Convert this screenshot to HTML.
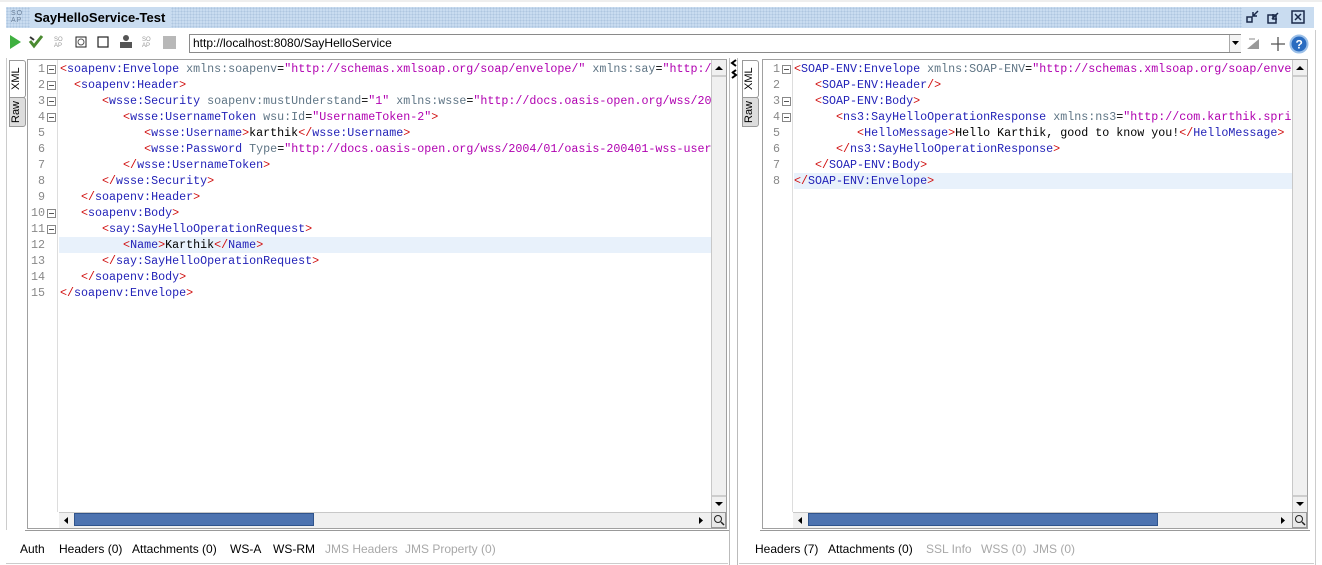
<!DOCTYPE html>
<html><head><style>
*{margin:0;padding:0;box-sizing:border-box}
body{width:1322px;height:565px;background:#fff;position:relative;overflow:hidden;font-family:"Liberation Sans",sans-serif;font-size:12px}
.abs{position:absolute}
.title{left:6px;top:7px;width:1308px;height:21px;background:#c9dcf0;background-image:radial-gradient(#aec6e0 0.8px,transparent 0.9px);background-size:3px 3px}
.title .lbl{position:absolute;left:24px;top:0;height:21px;line-height:21px;padding:0 6px 0 4px;background:#c9dcf0;font-weight:bold;font-size:13px;color:#000}
.soap{position:absolute;left:5px;top:3px;font-size:7px;line-height:7px;color:#6a7f99;letter-spacing:1px}
.tb{left:6px;top:30px;width:1308px;height:26px;background:#fff}
.url{left:189px;top:34px;width:1052px;height:19px;border:1px solid #8a8a8a;background:#fff;font-size:12px;line-height:17px;padding-left:3px}
.ed{border:1px solid #a0a0a0;background:#fff;overflow:hidden}
pre{font-family:"Liberation Mono",monospace;font-size:11.68px;line-height:16px;margin:0}
.t{color:#2323b8}.b{color:#d01010}.a{color:#5f7585}.v{color:#b000b0}
.ln{position:absolute;color:#888;font-family:"Liberation Mono",monospace;font-size:11.7px;line-height:16px;text-align:right}
.fold{display:inline-block;width:9px;height:9px;border:1px solid #888;position:relative;vertical-align:-1px;margin-left:2px}
.fold:after{content:"";position:absolute;left:1px;top:3px;width:5px;height:1px;background:#555}
.vs{background:#f0f0f0;border-left:1px solid #c8c8c8}
.hs{background:#f0f0f0;border-top:1px solid #c8c8c8}
.thumb{background:#4d73b0;border:1px solid #30548c}
.tab{border:1px solid #999;background:#e8e8e8;border-radius:3px 0 0 3px;writing-mode:vertical-rl;transform:rotate(180deg);font-size:11px;text-align:center}
.bt{top:542px;font-size:12px}
.g{color:#a8a8a8}
</style></head><body>
<div class="abs" style="left:0;top:0;width:1322px;height:2px;background:#eee"></div>
<div class="abs title"><div class="soap">SO<br>AP</div><div class="lbl">SayHelloService-Test</div>
<div style="position:absolute;right:0;top:0;width:72px;height:21px;background:#c9dcf0"></div>
<svg style="position:absolute;right:6px;top:3px" width="64" height="15"><g stroke="#1a2a4a" fill="none" stroke-width="1.5"><rect x="3" y="7" width="5" height="5"/><path d="M9 6 L14 1 M9 2 V6 H13"/><rect x="24" y="5" width="8" height="8"/><path d="M28 9 L34 3 M29 4 V9 H33" /><rect x="48" y="1" width="12" height="12"/><path d="M51 4 L57 10 M57 4 L51 10"/></g></svg></div>
<div class="abs tb">
<svg width="180" height="26"><path d="M4 5 L15 12 L4 19Z" fill="#3fb040"/><path d="M24 11 L28 16 L36 6" stroke="#4a8a30" stroke-width="3" fill="none"/><path d="M24 7 L28 10" stroke="#333" stroke-width="2"/>
<text x="48" y="11" font-size="6" fill="#999">SO</text><text x="48" y="17" font-size="6" fill="#999">AP</text>
<rect x="70" y="7" width="10" height="10" fill="none" stroke="#222"/><circle cx="75" cy="12" r="3" fill="none" stroke="#555"/>
<rect x="92" y="7" width="10" height="10" fill="none" stroke="#222" stroke-width="1.2"/>
<circle cx="120" cy="8" r="3" fill="#555"/><rect x="114" y="12" width="12" height="6" fill="#555"/>
<text x="136" y="11" font-size="6" fill="#999">SO</text><text x="136" y="17" font-size="6" fill="#999">AP</text>
<rect x="157" y="6" width="13" height="13" fill="#b8b8b8"/></svg></div>
<div class="abs url">http://localhost:8080/SayHelloService</div>
<div class="abs" style="left:1229px;top:35px;width:12px;height:17px;border-left:1px solid #aaa;background:#f4f4f4"><svg width="11" height="16"><path d="M2 6 H9 L5.5 10Z" fill="#000"/></svg></div>
<svg class="abs" style="left:1245px;top:33px" width="70" height="22"><path d="M2 16 L14 6 V16Z" fill="#999"/><path d="M4 6 H10" stroke="#888"/><path d="M33 4 V18 M26 11 H40" stroke="#555" stroke-width="1.3"/><circle cx="54" cy="11" r="8.5" fill="#2a6cc0" stroke="#9cc0e8" stroke-width="2"/><text x="50.5" y="15.5" font-size="12" font-weight="bold" fill="#fff">?</text></svg>

<div class="abs tab" style="left:9px;top:60px;width:17px;height:38px;background:#fff">XML</div>
<div class="abs tab" style="left:9px;top:97px;width:17px;height:30px;background:#ddd">Raw</div>
<div class="abs" style="left:6px;top:58px;width:1px;height:472px;background:#ccc"></div>
<div class="abs ed" style="left:27px;top:59px;width:700px;height:470px"></div>
<div class="abs" style="left:28px;top:60px;width:30px;height:452px;border-right:1px solid #ddd"></div>
<div class="abs" style="left:59px;top:237px;width:652px;height:16px;background:#e8f1fb"></div>
<div class="ln" style="left:28px;top:61px;width:17px">1<br>2<br>3<br>4<br>5<br>6<br>7<br>8<br>9<br>10<br>11<br>12<br>13<br>14<br>15</div>
<div class="abs" style="left:45px;top:61px;line-height:16px"><span class="fold"></span><br><span class="fold"></span><br><span class="fold"></span><br><span class="fold"></span><br><br><br><br><br><br><span class="fold"></span><br><span class="fold"></span></div>
<div class="abs" style="left:60px;top:61px;width:651px;height:451px;overflow:hidden"><pre><span class="b">&lt;</span><span class="t">soapenv:Envelope</span> <span class="a">xmlns:soapenv</span>=<span class="v">"http://schemas.xmlsoap.org/soap/envelope/"</span> <span class="a">xmlns:say</span>=<span class="v">"http://</span>
  <span class="b">&lt;</span><span class="t">soapenv:Header</span><span class="b">&gt;</span>
      <span class="b">&lt;</span><span class="t">wsse:Security</span> <span class="a">soapenv:mustUnderstand</span>=<span class="v">"1"</span> <span class="a">xmlns:wsse</span>=<span class="v">"http://docs.oasis-open.org/wss/20</span>
         <span class="b">&lt;</span><span class="t">wsse:UsernameToken</span> <span class="a">wsu:Id</span>=<span class="v">"UsernameToken-2"</span><span class="b">&gt;</span>
            <span class="b">&lt;</span><span class="t">wsse:Username</span><span class="b">&gt;</span>karthik<span class="b">&lt;/</span><span class="t">wsse:Username</span><span class="b">&gt;</span>
            <span class="b">&lt;</span><span class="t">wsse:Password</span> <span class="a">Type</span>=<span class="v">"http://docs.oasis-open.org/wss/2004/01/oasis-200401-wss-user</span>
         <span class="b">&lt;/</span><span class="t">wsse:UsernameToken</span><span class="b">&gt;</span>
      <span class="b">&lt;/</span><span class="t">wsse:Security</span><span class="b">&gt;</span>
   <span class="b">&lt;/</span><span class="t">soapenv:Header</span><span class="b">&gt;</span>
   <span class="b">&lt;</span><span class="t">soapenv:Body</span><span class="b">&gt;</span>
      <span class="b">&lt;</span><span class="t">say:SayHelloOperationRequest</span><span class="b">&gt;</span>
         <span class="b">&lt;</span><span class="t">Name</span><span class="b">&gt;</span>Karthik<span class="b">&lt;/</span><span class="t">Name</span><span class="b">&gt;</span>
      <span class="b">&lt;/</span><span class="t">say:SayHelloOperationRequest</span><span class="b">&gt;</span>
   <span class="b">&lt;/</span><span class="t">soapenv:Body</span><span class="b">&gt;</span>
<span class="b">&lt;/</span><span class="t">soapenv:Envelope</span><span class="b">&gt;</span></pre></div>
<div class="abs vs" style="left:711px;top:60px;width:15px;height:452px"><svg width="15" height="452"><path d="M3 10 H11 L7 6Z" fill="#000"/><path d="M3 442 H11 L7 446Z" fill="#000"/><line x1="0" y1="16" x2="15" y2="16" stroke="#aaa"/><line x1="0" y1="436" x2="15" y2="436" stroke="#aaa"/></svg></div>
<div class="abs hs" style="left:59px;top:512px;width:652px;height:16px"><svg width="652" height="15"><path d="M9 4 V11 L5 7.5Z" fill="#000"/><path d="M640 4 V11 L644 7.5Z" fill="#000"/></svg></div>
<div class="abs thumb" style="left:74px;top:513px;width:240px;height:13px"></div>
<div class="abs" style="left:711px;top:512px;width:15px;height:16px;background:#e8e8e8;border:1px solid #999"><svg width="13" height="14"><circle cx="6" cy="6" r="3.5" fill="none" stroke="#222"/><path d="M9 9 L12 12" stroke="#222" stroke-width="1.5"/></svg></div>
<div class="abs" style="left:25px;top:530px;width:705px;height:1px;background:#999"></div>

<div class="abs" style="left:729px;top:58px;width:9px;height:507px;border-left:1px solid #bbb;border-right:1px solid #bbb;background:#fff"><svg width="8" height="25"><path d="M6 2 L2 5 L6 8 M6 12 L2 15" stroke="#000" stroke-width="2" fill="none"/><path d="M2 14 L6 17 L2 20" stroke="#000" stroke-width="2" fill="none"/></svg></div>

<div class="abs tab" style="left:742px;top:60px;width:17px;height:38px;background:#fff">XML</div>
<div class="abs tab" style="left:742px;top:97px;width:17px;height:30px;background:#ddd">Raw</div>
<div class="abs ed" style="left:762px;top:59px;width:546px;height:470px"></div>
<div class="abs" style="left:763px;top:60px;width:30px;height:452px;border-right:1px solid #ddd"></div>
<div class="abs" style="left:794px;top:173px;width:498px;height:16px;background:#e8f1fb"></div>
<div class="ln" style="left:763px;top:61px;width:17px">1<br>2<br>3<br>4<br>5<br>6<br>7<br>8</div>
<div class="abs" style="left:780px;top:61px;line-height:16px"><span class="fold"></span><br><br><span class="fold"></span><br><span class="fold"></span></div>
<div class="abs" style="left:794px;top:61px;width:498px;height:451px;overflow:hidden"><pre><span class="b">&lt;</span><span class="t">SOAP-ENV:Envelope</span> <span class="a">xmlns:SOAP-ENV</span>=<span class="v">"http://schemas.xmlsoap.org/soap/envelope/"</span>
   <span class="b">&lt;</span><span class="t">SOAP-ENV:Header</span><span class="b">/&gt;</span>
   <span class="b">&lt;</span><span class="t">SOAP-ENV:Body</span><span class="b">&gt;</span>
      <span class="b">&lt;</span><span class="t">ns3:SayHelloOperationResponse</span> <span class="a">xmlns:ns3</span>=<span class="v">"http://com.karthik.springws"</span>
         <span class="b">&lt;</span><span class="t">HelloMessage</span><span class="b">&gt;</span>Hello Karthik, good to know you!<span class="b">&lt;/</span><span class="t">HelloMessage</span><span class="b">&gt;</span>
      <span class="b">&lt;/</span><span class="t">ns3:SayHelloOperationResponse</span><span class="b">&gt;</span>
   <span class="b">&lt;/</span><span class="t">SOAP-ENV:Body</span><span class="b">&gt;</span>
<span class="b">&lt;/</span><span class="t">SOAP-ENV:Envelope</span><span class="b">&gt;</span></pre></div>
<div class="abs vs" style="left:1292px;top:60px;width:15px;height:452px"><svg width="15" height="452"><path d="M3 10 H11 L7 6Z" fill="#000"/><path d="M3 442 H11 L7 446Z" fill="#000"/><line x1="0" y1="16" x2="15" y2="16" stroke="#aaa"/><line x1="0" y1="436" x2="15" y2="436" stroke="#aaa"/></svg></div>
<div class="abs hs" style="left:793px;top:512px;width:499px;height:16px"><svg width="499" height="15"><path d="M9 4 V11 L5 7.5Z" fill="#000"/><path d="M488 4 V11 L492 7.5Z" fill="#000"/></svg></div>
<div class="abs thumb" style="left:808px;top:513px;width:350px;height:13px"></div>
<div class="abs" style="left:1292px;top:512px;width:15px;height:16px;background:#e8e8e8;border:1px solid #999"><svg width="13" height="14"><circle cx="6" cy="6" r="3.5" fill="none" stroke="#222"/><path d="M9 9 L12 12" stroke="#222" stroke-width="1.5"/></svg></div>
<div class="abs" style="left:760px;top:530px;width:550px;height:1px;background:#999"></div>
<div class="abs" style="left:1315px;top:30px;width:1px;height:535px;background:#ccc"></div>

<div class="abs bt" style="left:20px">Auth</div>
<div class="abs bt" style="left:59px">Headers (0)</div>
<div class="abs bt" style="left:132px">Attachments (0)</div>
<div class="abs bt" style="left:230px">WS-A</div>
<div class="abs bt" style="left:273px">WS-RM</div>
<div class="abs bt g" style="left:325px">JMS Headers</div>
<div class="abs bt g" style="left:405px">JMS Property (0)</div>
<div class="abs bt" style="left:755px">Headers (7)</div>
<div class="abs bt" style="left:828px">Attachments (0)</div>
<div class="abs bt g" style="left:926px">SSL Info</div>
<div class="abs bt g" style="left:981px">WSS (0)</div>
<div class="abs bt g" style="left:1033px">JMS (0)</div>
<div class="abs" style="left:6px;top:563px;width:722px;height:1px;background:#ccc"></div>
<div class="abs" style="left:739px;top:563px;width:575px;height:1px;background:#ccc"></div>
</body></html>
